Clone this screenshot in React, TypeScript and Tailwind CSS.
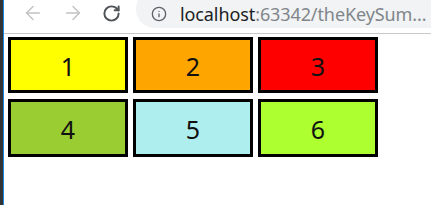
import { ArrowLeft, ArrowRight, RotateCw, Info } from 'lucide-react';

const boxes = [
  { n: 1, bg: 'bg-[#ffff00]', h: 'h-[56px]' },
  { n: 2, bg: 'bg-[#ffa500]', h: 'h-[56px]' },
  { n: 3, bg: 'bg-[#ff0000]', h: 'h-[56px]' },
  { n: 4, bg: 'bg-[#9acd32]', h: 'h-[58px]' },
  { n: 5, bg: 'bg-[#afeeee]', h: 'h-[58px]' },
  { n: 6, bg: 'bg-[#adff2f]', h: 'h-[58px]' },
];

export default function App() {
  return (
    <div className="flex h-[205px] w-[431px] overflow-hidden bg-white font-['Noto_Sans',sans-serif]">
      <div className="w-[3px] shrink-0 bg-[#2f3336]" />
      <div className="w-px shrink-0 bg-[#1e88e5]" />
      <div className="flex min-w-0 flex-1 flex-col">
        {/* browser toolbar */}
        <div className="flex h-[34px] shrink-0 items-start border-b border-[#c8c8c8]">
          <div className="flex h-[26px] items-center">
            <ArrowLeft className="ml-[18px] h-[22px] w-[22px] text-[#c2c2c2]" strokeWidth={1.5} />
            <ArrowRight className="ml-[18px] h-[22px] w-[22px] text-[#c2c2c2]" strokeWidth={1.5} />
            <RotateCw className="ml-[18px] h-[19px] w-[19px] text-[#505357]" strokeWidth={2.5} />
          </div>
          <div className="ml-[15px] -mt-[10px] flex h-[38px] flex-1 items-center rounded-l-full bg-[#f1f3f4] pt-[10px]">
            <Info className="ml-[15px] h-[16px] w-[16px] text-[#5f6368]" strokeWidth={2} />
            <span className="ml-[13px] whitespace-nowrap text-[18px] leading-none tracking-[-0.1px]">
              <span className="text-[#202124]">localhost</span>
              <span className="text-[#80868b]">:63342/theKeySum...</span>
            </span>
          </div>
        </div>
        {/* boxes */}
        <div className="grid grid-cols-[120px_120px_120px] gap-x-[5px] gap-y-[6px] pl-[4px] pt-[3px]">
          {boxes.map((b) => (
            <div
              key={b.n}
              className={`flex ${b.h} items-center justify-center border-[3px] border-black ${b.bg} pt-[4px] text-[25px] text-[#111]`}
            >
              {b.n}
            </div>
          ))}
        </div>
      </div>
    </div>
  );
}
